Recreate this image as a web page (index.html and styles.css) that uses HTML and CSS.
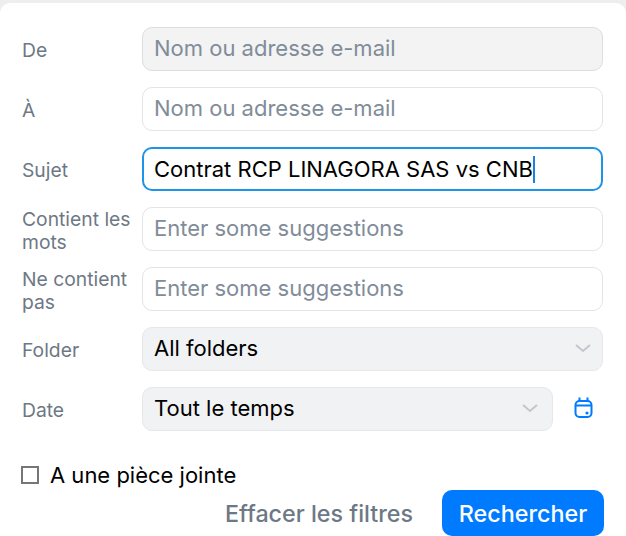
FILE: index.html
```html
<!DOCTYPE html>
<html lang="fr">
<head>
  <meta charset="UTF-8">
  <title>Recherche</title>
  <link rel="stylesheet" href="styles.css">
</head>
<body>
  <form class="panel">
    <div class="row">
      <label class="label">De</label>
      <input class="field field-off" type="text" placeholder="Nom ou adresse e-mail">
    </div>
    <div class="row">
      <label class="label">À</label>
      <input class="field" type="text" placeholder="Nom ou adresse e-mail">
    </div>
    <div class="row">
      <label class="label">Sujet</label>
      <div class="field field-focus">Contrat RCP LINAGORA SAS vs CNB<span class="caret"></span></div>
    </div>
    <div class="row">
      <label class="label">Contient les mots</label>
      <input class="field" type="text" placeholder="Enter some suggestions">
    </div>
    <div class="row">
      <label class="label">Ne contient pas</label>
      <input class="field" type="text" placeholder="Enter some suggestions">
    </div>
    <div class="row">
      <label class="label">Folder</label>
      <div class="field field-select">
        <span>All folders</span>
        <svg class="chevron" width="16" height="10" viewBox="0 0 16 10"><path d="M1 2l7 6 7-6"/></svg>
      </div>
    </div>
    <div class="row">
      <label class="label">Date</label>
      <div class="field field-select field-date">
        <span>Tout le temps</span>
        <svg class="chevron" width="16" height="10" viewBox="0 0 16 10"><path d="M1 2l7 6 7-6"/></svg>
      </div>
      <svg class="calendar" width="22" height="24" viewBox="0 0 22 24">
        <rect x="3.500" y="4" width="16" height="16" rx="4"/>
        <path d="M3.500 8.500h16M7.500 0.500v4M15.500 0.500v4"/>
        <circle cx="15" cy="16" r="1.600"/>
      </svg>
    </div>
    <label class="check"><span class="box"></span>A une pièce jointe</label>
    <div class="actions">
      <button class="clear-btn" type="button">Effacer les filtres</button>
      <button class="search-btn" type="button">Rechercher</button>
    </div>
  </form>
</body>
</html>
```

FILE: styles.css
```css
html, body {
  margin: 0;
  height: 100%;
  overflow: hidden;
  background: #eeeeee;
}
body {
  padding-top: 3px;
  box-sizing: border-box;
  font-family: Inter, "Noto Sans", sans-serif;
}
.panel {
  background: #fff;
  border-radius: 10px 10px 0 0;
  height: 100%;
  padding: 24px 23px 0 22px;
  box-sizing: border-box;
}
.row {
  display: flex;
  align-items: center;
  height: 44px;
  margin-bottom: 16px;
}
.label {
  width: 120px;
  flex: none;
  padding-top: 3px;
  color: #6d7885;
  font-size: 19.300px;
  line-height: 23px;
}
.field {
  flex: 1;
  min-width: 0;
  height: 44px;
  box-sizing: border-box;
  padding: 0 11px 2px;
  border: 1px solid #e3e4e6;
  border-radius: 10px;
  background: #fff;
  color: #000;
  font-family: inherit;
  font-size: 22px;
  line-height: 40px;
  outline: none;
}
.field::placeholder {
  color: #818c99;
  opacity: 1;
}
.field-off {
  background: #f3f3f4;
  border-color: #dcdddf;
}
.field-focus {
  display: flex;
  align-items: center;
  border: 2px solid #1e94e8;
  padding: 0 10px;
}
.caret {
  width: 2px;
  height: 27px;
  background: #1a7fe0;
}
.field-select {
  display: flex;
  align-items: center;
  justify-content: space-between;
  background: #f1f2f4;
  border-color: #e6e7ea;
  padding-right: 11px;
}
.field-date {
  padding-right: 14px;
}
.chevron {
  fill: none;
  stroke: #c2c7ce;
  stroke-width: 2;
}
.calendar {
  flex: none;
  margin: 0 9px 0 19px;
  fill: none;
  stroke: #007aff;
  stroke-width: 2;
}
.calendar circle {
  fill: #007aff;
  stroke: none;
}
.check {
  display: flex;
  align-items: center;
  gap: 11px;
  margin: 32px 0 0 -1px;
  color: #000;
  font-size: 22px;
  line-height: 24px;
}
.box {
  width: 18px;
  height: 18px;
  border: 2px solid #767676;
  box-sizing: border-box;
}
.actions {
  display: flex;
  justify-content: flex-end;
  align-items: center;
  gap: 29px;
  margin: 3px -1px 0 0;
}
.clear-btn, .search-btn {
  border: none;
  font-family: inherit;
  font-size: 23.300px;
  font-weight: 500;
  padding: 0;
  cursor: pointer;
}
.clear-btn {
  background: none;
  color: #6d7885;
}
.search-btn {
  background: #007aff;
  color: #fff;
  width: 162px;
  height: 46px;
  border-radius: 10px;
}
```
